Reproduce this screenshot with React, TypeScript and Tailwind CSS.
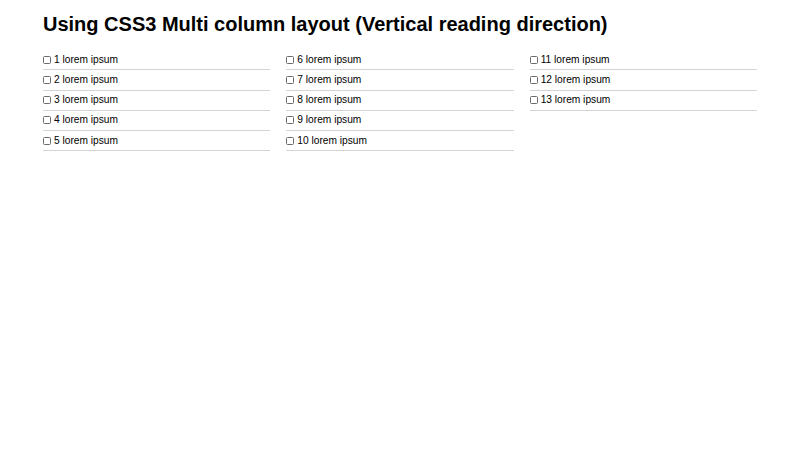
import React from "react";

const items = Array.from({ length: 13 }, (_, i) => `${i + 1} lorem ipsum`);

export default function App() {
  return (
    <div className="min-h-[450px] bg-white px-[43px] pt-[10px] font-['Liberation_Sans',Arial,sans-serif] text-black">
      <h1 className="text-[20px] font-bold leading-[28px]">
        Using CSS3 Multi column layout (Vertical reading direction)
      </h1>
      <ul className="mt-[12px] grid grid-flow-col grid-cols-3 grid-rows-5 gap-x-4">
        {items.map((t) => (
          <li
            key={t}
            className="flex h-[20.25px] items-center border-b border-[#d4d4d4] text-[10.2px] leading-none"
          >
            <span className="mr-[3px] inline-block h-[8px] w-[8px] rounded-[1.5px] border border-[#6b6b6b] bg-white" />
            <span>{t}</span>
          </li>
        ))}
      </ul>
    </div>
  );
}
